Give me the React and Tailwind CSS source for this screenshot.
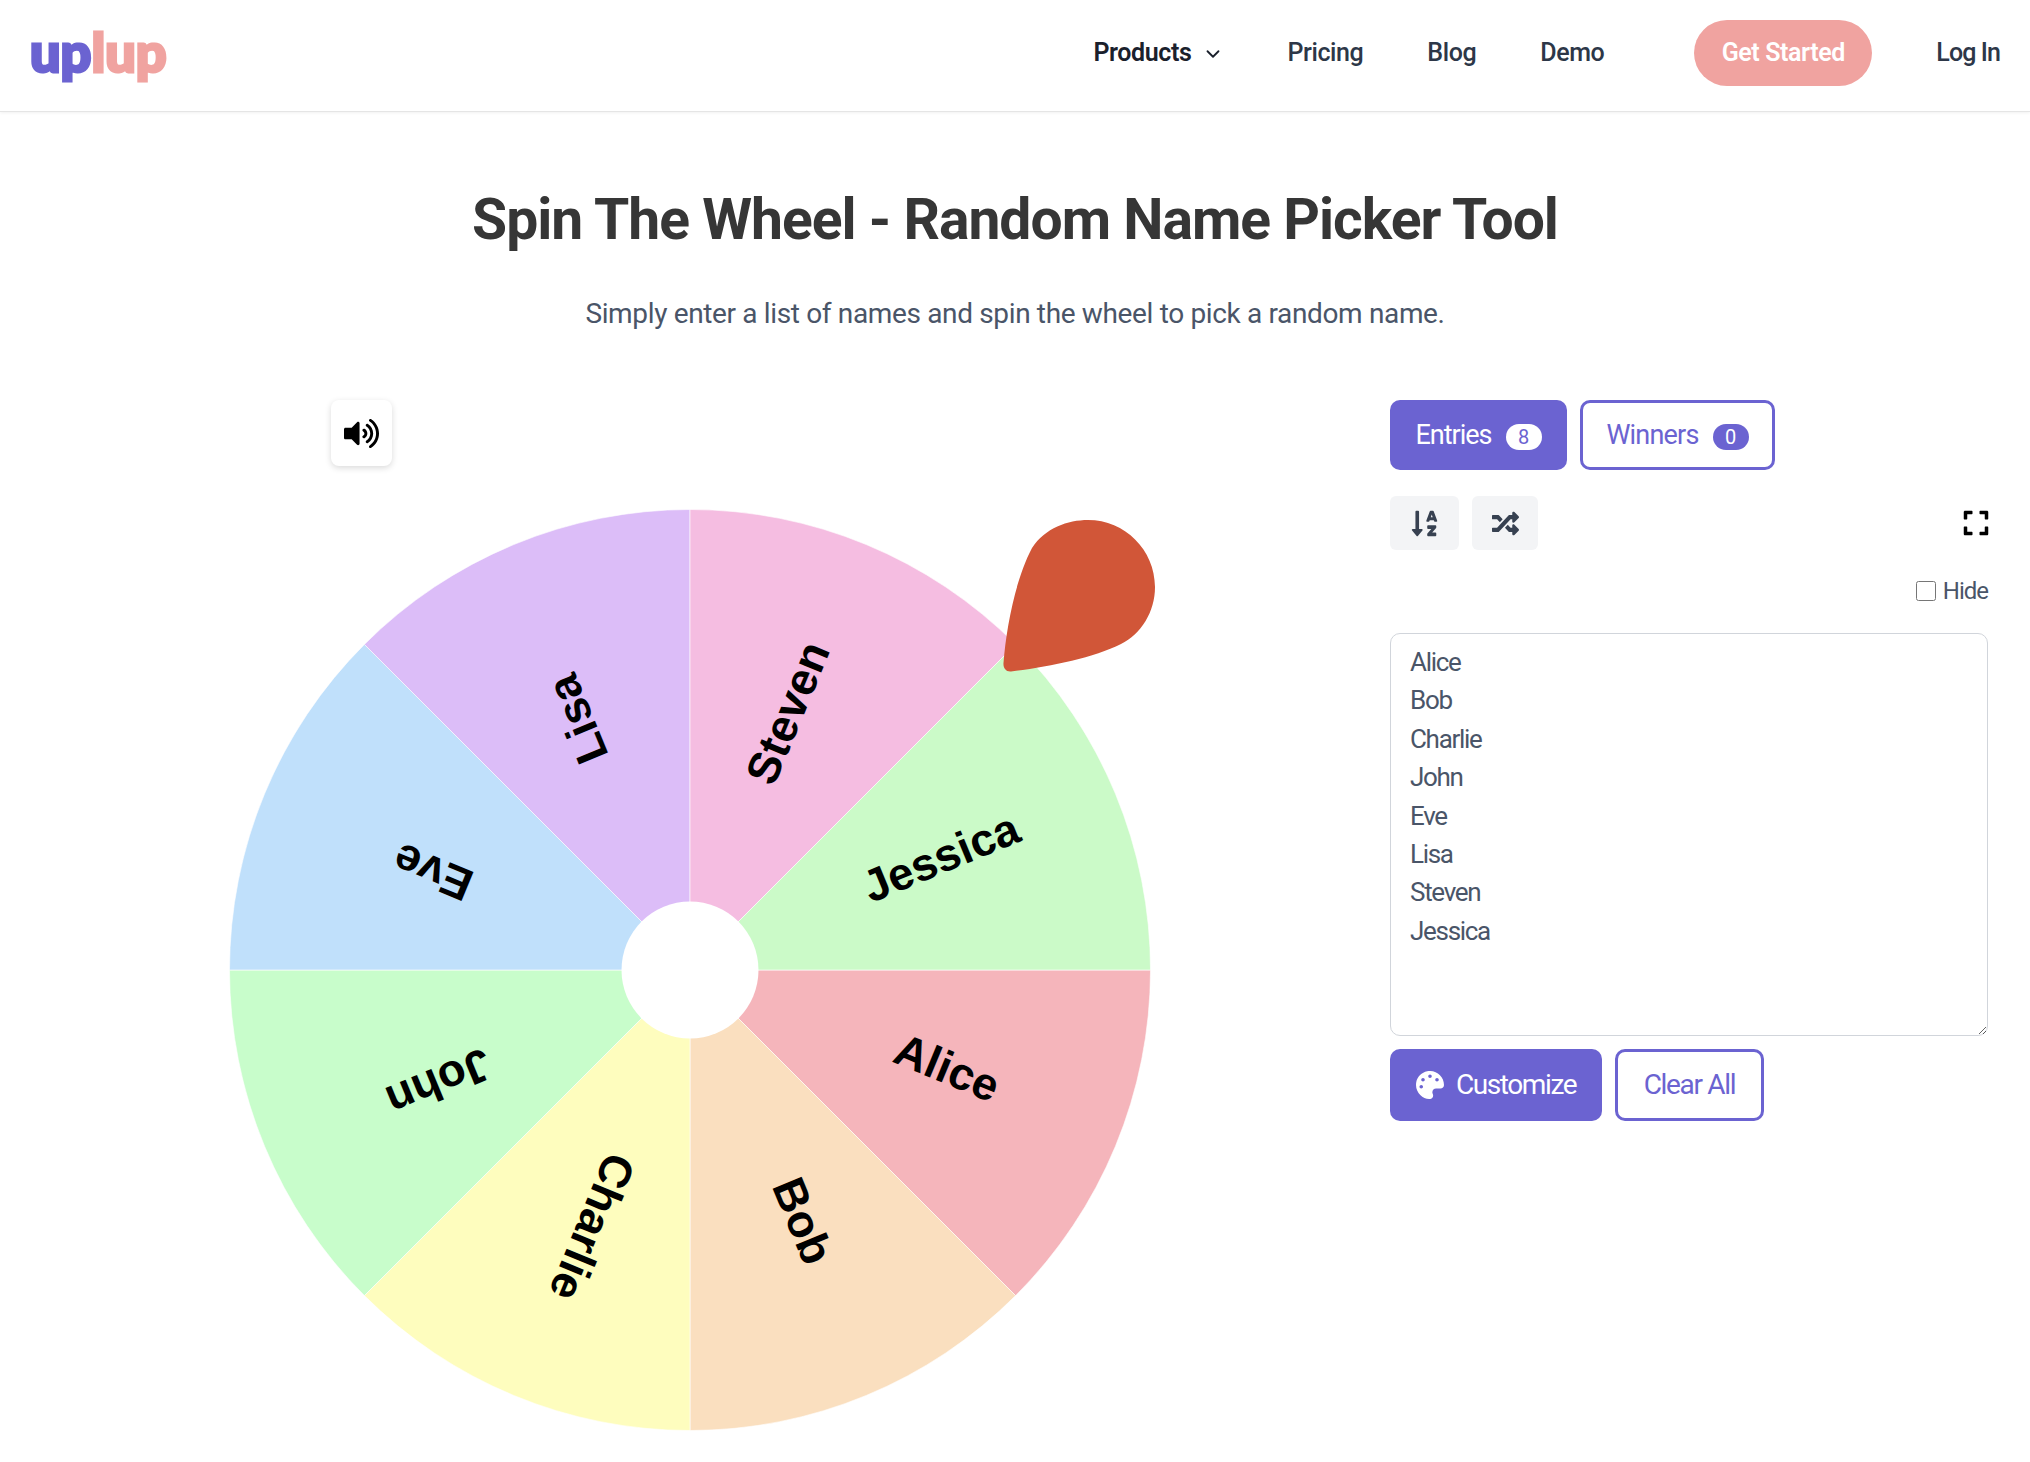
import React from "react";
import { ChevronDown } from "lucide-react";
import { FaVolumeUp, FaSortAlphaDown, FaRandom, FaExpand, FaPalette } from "react-icons/fa";

const slices = [
  { name: "Alice", color: "#f5b5bb" },
  { name: "Bob", color: "#fadfbf" },
  { name: "Charlie", color: "#fefdbe" },
  { name: "John", color: "#c8fdcb" },
  { name: "Eve", color: "#c0e0fb" },
  { name: "Lisa", color: "#dcbdf8" },
  { name: "Steven", color: "#f5bde1" },
  { name: "Jessica", color: "#cbfac8" },
];

const names = ["Alice", "Bob", "Charlie", "John", "Eve", "Lisa", "Steven", "Jessica"];

function Wheel() {
  const c = 461;
  const r = 460.5;
  return (
    <svg width="922" height="922" viewBox="0 0 922 922" className="block">
      {slices.map((s, i) => {
        const a0 = (i * 45 * Math.PI) / 180;
        const a1 = ((i + 1) * 45 * Math.PI) / 180;
        const d = `M${c} ${c} L${c + r * Math.cos(a0)} ${c + r * Math.sin(a0)} A${r} ${r} 0 0 1 ${c + r * Math.cos(a1)} ${c + r * Math.sin(a1)} Z`;
        return <path key={s.name} d={d} fill={s.color} stroke="#ffffff" strokeOpacity="0.6" strokeWidth="1" />;
      })}
      {slices.map((s, i) => (
        <text
          key={s.name}
          x={c + 275}
          y={c - 8}
          transform={`rotate(${i * 45 + 22.5} ${c} ${c})`}
          textAnchor="middle"
          dominantBaseline="central"
          fontFamily="'Liberation Sans', Arial, sans-serif"
          fontWeight="700"
          fontSize="45.5"
          fill="#000"
        >
          {s.name}
        </text>
      ))}
      <circle cx={c} cy={c} r="68.5" fill="#fff" />
    </svg>
  );
}

function Pointer() {
  return (
    <svg width="153" height="153" viewBox="0 0 153 153" className="absolute left-[774px] top-[11px]">
      <path
        d="M0.5 143 C3 110 12 60 29 28 C42 8 65 0 85 0 C122 0 152 30 152 67 C152 92 138 114 118 124 C90 138 45 147 8 151.5 C3 152 0 148 0.5 143 Z"
        fill="#d15638"
      />
    </svg>
  );
}

export default function App() {
  return (
    <div className="min-h-[1462px] bg-white font-['Roboto',sans-serif]">
      {/* Header */}
      <header className="flex h-[112px] items-center border-b border-[#e5e5e5] pb-[5px] pl-[30px] pr-[30px] shadow-[0_1px_3px_rgba(0,0,0,0.06)]">
        <div className="mb-[3px] font-['Lato',sans-serif] text-[54px] leading-none font-black [-webkit-text-stroke:3px_currentColor]">
          <span className="text-[#6b63d1]">up</span>
          <span className="text-[#f0a3a0]">lup</span>
        </div>
        <nav className="ml-auto flex items-center text-[25px] font-medium tracking-[-0.4px] text-[#2d3748]">
          <a className="flex items-center font-semibold text-[#1a202c]">
            Products
            <ChevronDown className="ml-[11px] mt-[2px] h-[22px] w-[22px]" strokeWidth={2} />
          </a>
          <a className="ml-[63px]">Pricing</a>
          <a className="ml-[64px]">Blog</a>
          <a className="ml-[64px]">Demo</a>
          <a className="ml-[90px] flex h-[66px] w-[178px] items-center justify-center rounded-full bg-[#f0a3a0] font-semibold text-white">
            Get Started
          </a>
          <a className="ml-[64px] tracking-[-0.9px]">Log In</a>
        </nav>
      </header>

      <main>
        <h1 className="mt-[76px] text-center text-[57px] leading-[64px] font-bold tracking-[-1px] text-[#363636]">
          Spin The Wheel - Random Name Picker Tool
        </h1>
        <p className="mt-[42px] text-center text-[28px] leading-[40px] tracking-[-0.35px] text-[#4a5568]">
          Simply enter a list of names and spin the wheel to pick a random name.
        </p>

        <div className="mt-[66px] flex justify-between pl-[229px] pr-[42px]">
          {/* Wheel column */}
          <div className="relative w-[922px]">
            <button className="ml-[102px] flex h-[66px] w-[61px] items-center justify-center rounded-[8px] bg-white shadow-[0_2px_6px_rgba(0,0,0,0.15)]">
              <FaVolumeUp className="h-[35px] w-[35px] text-black" />
            </button>
            <div className="relative mt-[43px]">
              <Wheel />
              <Pointer />
            </div>
          </div>

          {/* Entries column */}
          <div className="w-[598px]">
            <div className="flex gap-[13px]">
              <button className="flex h-[70px] w-[177px] items-center justify-center gap-[14px] rounded-[10px] bg-[#6b63d1] text-[27px] tracking-[-1px] text-white">
                Entries
                <span className="mt-[3px] flex h-[26px] w-[36px] items-center justify-center rounded-full bg-white text-[20px] tracking-normal text-[#6b63d1]">8</span>
              </button>
              <button className="flex h-[70px] w-[195px] items-center justify-center gap-[14px] rounded-[10px] border-[3px] border-[#6b63d1] bg-white text-[27px] tracking-[-0.8px] text-[#6b63d1]">
                Winners
                <span className="mt-[3px] flex h-[26px] w-[36px] items-center justify-center rounded-full bg-[#6b63d1] text-[20px] tracking-normal text-white">0</span>
              </button>
            </div>

            <div className="mt-[26px] flex items-center gap-[13px]">
              <button className="flex h-[54px] w-[69px] items-center justify-center rounded-[6px] bg-[#f3f4f6]">
                <FaSortAlphaDown className="h-[29px] w-[29px] text-[#374151]" />
              </button>
              <button className="flex h-[54px] w-[66px] items-center justify-center rounded-[6px] bg-[#f3f4f6]">
                <FaRandom className="h-[27px] w-[27px] text-[#374151]" />
              </button>
              <FaExpand className="ml-auto -mr-[2px] h-[28px] w-[28px] text-black" />
            </div>

            <div className="mt-[28px] flex items-center justify-end gap-[7px] text-[24px] leading-[26px] tracking-[-1px] text-[#4a5568]">
              <input type="checkbox" className="h-[20px] w-[20px]" />
              <span>Hide</span>
            </div>

            <textarea
              readOnly
              defaultValue={names.join("\n")}
              className="mt-[29px] block h-[403px] w-full rounded-[10px] border border-[#d1d5db] px-[19px] pt-[9px] pb-[8px] text-[26px] leading-[38.4px] tracking-[-1.3px] text-[#4a5568] outline-none"
            />

            <div className="mt-[13px] flex gap-[13px]">
              <button className="flex h-[72px] w-[212px] items-center justify-center gap-[12px] rounded-[10px] bg-[#6b63d1] text-[28px] tracking-[-1.4px] text-white">
                <FaPalette className="h-[28px] w-[28px]" />
                Customize
              </button>
              <button className="flex h-[72px] w-[149px] items-center justify-center rounded-[10px] border-[3px] border-[#6b63d1] bg-white text-[28px] tracking-[-1.3px] text-[#6b63d1]">
                Clear All
              </button>
            </div>
          </div>
        </div>
      </main>
    </div>
  );
}
